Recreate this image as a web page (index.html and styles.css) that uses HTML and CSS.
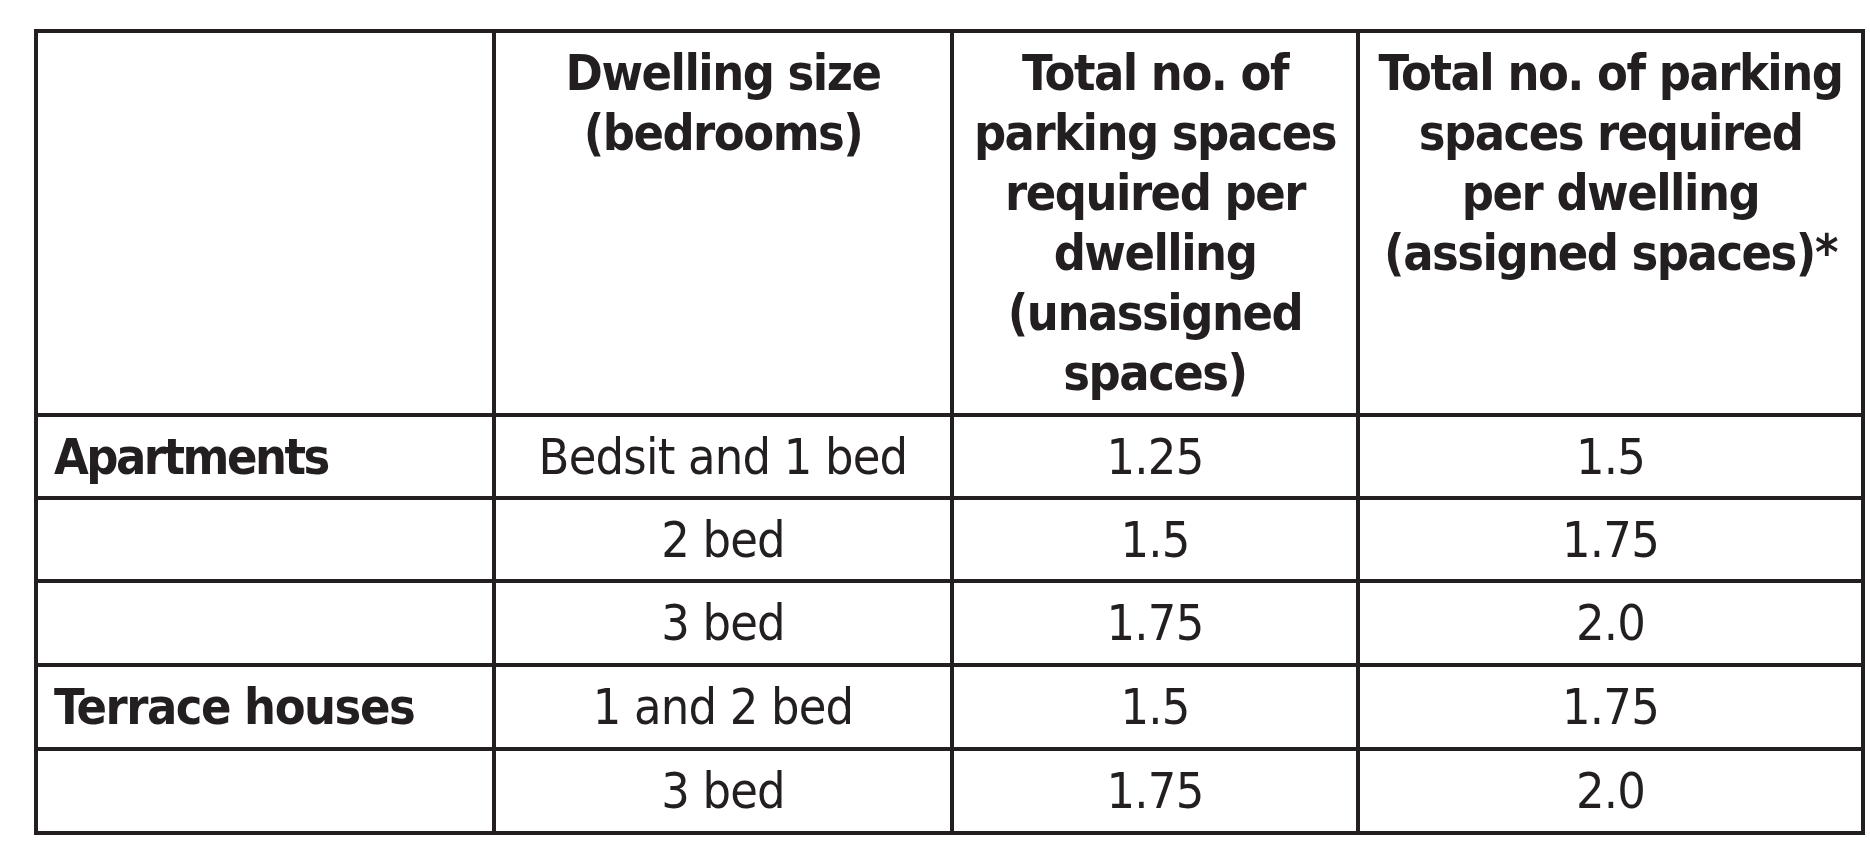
FILE: index.html
```html
<!DOCTYPE html>
<html lang="en">
<head>
<meta charset="utf-8">
<title>Parking standards</title>
<link rel="stylesheet" href="styles.css">
</head>
<body>
<div class="page">
  <div class="grid" role="table">
    <div class="cell head" role="columnheader"></div>
    <div class="cell head" role="columnheader">Dwelling size<br>(bedrooms)</div>
    <div class="cell head" role="columnheader">Total no. of<br>parking spaces<br>required per<br>dwelling<br>(unassigned<br>spaces)</div>
    <div class="cell head" role="columnheader">Total no. of parking<br>spaces required<br>per dwelling<br>(assigned spaces)*</div>

    <div class="cell label" role="rowheader"><span class="tight">Apartments</span></div>
    <div class="cell val">Bedsit and 1 bed</div>
    <div class="cell val">1.25</div>
    <div class="cell val">1.5</div>

    <div class="cell label" role="rowheader"></div>
    <div class="cell val">2 bed</div>
    <div class="cell val">1.5</div>
    <div class="cell val">1.75</div>

    <div class="cell label" role="rowheader"></div>
    <div class="cell val">3 bed</div>
    <div class="cell val">1.75</div>
    <div class="cell val">2.0</div>

    <div class="cell label" role="rowheader">Terrace houses</div>
    <div class="cell val">1 and 2 bed</div>
    <div class="cell val">1.5</div>
    <div class="cell val">1.75</div>

    <div class="cell label" role="rowheader"></div>
    <div class="cell val">3 bed</div>
    <div class="cell val">1.75</div>
    <div class="cell val">2.0</div>
  </div>
</div>
</body>
</html>
```
FILE: styles.css
```css
html, body {
  margin: 0;
  padding: 0;
  background: #ffffff;
}

.page {
  padding: 29px 0 0 34px;
  font-family: "DejaVu Sans Condensed", "DejaVu Sans", sans-serif;
  color: #231f20;
}

.grid {
  display: grid;
  grid-template-columns: 458px 458px 406px 505px;
  grid-template-rows: 384px 83px 83px 84px 84px 84px;
  width: max-content;
  border-top: 4px solid #231f20;
  border-left: 4px solid #231f20;
}

.cell {
  box-sizing: border-box;
  border-right: 4px solid #231f20;
  border-bottom: 4px solid #231f20;
  font-size: 50px;
  white-space: nowrap;
}

.head {
  font-weight: bold;
  text-align: center;
  line-height: 60px;
  padding-top: 10px;
  letter-spacing: -1.5px;
}

.label {
  display: flex;
  align-items: center;
  padding-left: 16px;
  font-weight: bold;
  letter-spacing: -1.5px;
}

.tight {
  letter-spacing: -2.5px;
}

.val {
  display: flex;
  align-items: center;
  justify-content: center;
  letter-spacing: -0.8px;
}
```
